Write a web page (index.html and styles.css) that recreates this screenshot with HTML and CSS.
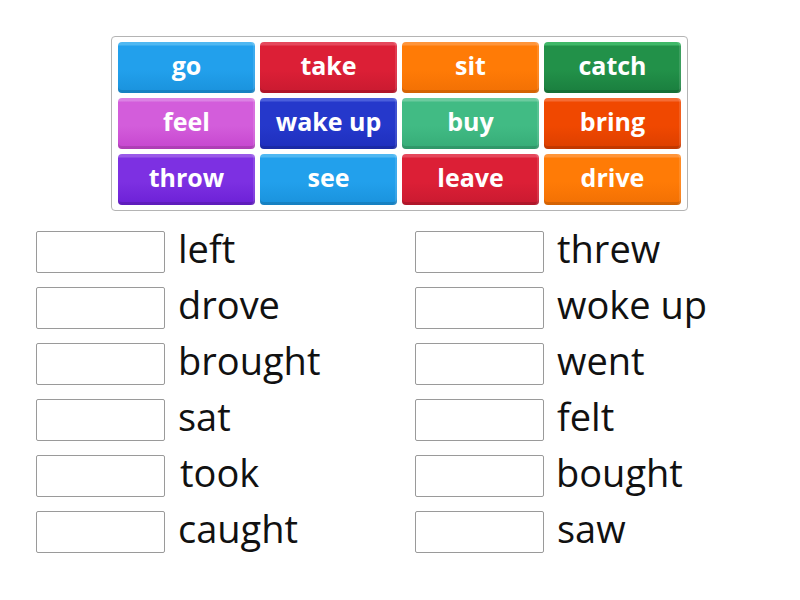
FILE: index.html
```html
<!DOCTYPE html>
<html>
<head>
<meta charset="utf-8">
<link rel="stylesheet" href="styles.css">
</head>
<body>
<div class="bank">
  <div class="tile blue">go</div>
  <div class="tile red">take</div>
  <div class="tile orange">sit</div>
  <div class="tile green">catch</div>
  <div class="tile pink">feel</div>
  <div class="tile navy">wake up</div>
  <div class="tile teal">buy</div>
  <div class="tile redorange">bring</div>
  <div class="tile purple">throw</div>
  <div class="tile blue">see</div>
  <div class="tile red">leave</div>
  <div class="tile orange">drive</div>
</div>
<div class="answers">
  <div class="row"><div class="box"></div><span class="word">left</span></div>
  <div class="row"><div class="box"></div><span class="word">threw</span></div>
  <div class="row"><div class="box"></div><span class="word">drove</span></div>
  <div class="row"><div class="box"></div><span class="word">woke up</span></div>
  <div class="row"><div class="box"></div><span class="word">brought</span></div>
  <div class="row"><div class="box"></div><span class="word">went</span></div>
  <div class="row"><div class="box"></div><span class="word">sat</span></div>
  <div class="row"><div class="box"></div><span class="word">felt</span></div>
  <div class="row"><div class="box"></div><span class="word shift">took</span></div>
  <div class="row"><div class="box"></div><span class="word back">bought</span></div>
  <div class="row"><div class="box"></div><span class="word">caught</span></div>
  <div class="row"><div class="box"></div><span class="word">saw</span></div>
</div>
</body>
</html>
```
FILE: styles.css
```css
html, body {
  margin: 0;
  padding: 0;
  background: #ffffff;
  font-family: "Open Sans", "Liberation Sans", sans-serif;
}

.bank {
  width: 564px;
  margin: 36px 0 0 111px;
  padding: 5px 5px 5px 6px;
  border: 1px solid #b4b4b4;
  border-radius: 4px;
  display: grid;
  grid-template-columns: repeat(4, 137px);
  grid-auto-rows: 51px;
  column-gap: 5px;
  row-gap: 5px;
}

.tile {
  display: flex;
  align-items: center;
  justify-content: center;
  color: #ffffff;
  font-weight: 700;
  font-size: 25px;
  border-radius: 4px;
  background: linear-gradient(to bottom, var(--hi) 0, var(--hi) 3px, var(--base) 4px, var(--base) 55%, var(--lo) 100%);
  box-shadow: inset 0 -3px 0 rgba(0, 0, 0, 0.12), inset -2px 0 0 rgba(255, 255, 255, 0.12);
  padding-bottom: 5px;
  box-sizing: border-box;
}

.blue { --hi: #4fb8f2; --base: #22a0ec; --lo: #1a92dc; }
.red { --hi: #e5485c; --base: #dc1f36; --lo: #c91a30; }
.orange { --hi: #ff953a; --base: #ff7b06; --lo: #f27004; }
.green { --hi: #3fb868; --base: #229149; --lo: #1a7e3e; }
.pink { --hi: #dc82e4; --base: #d35ddb; --lo: #c646cf; }
.navy { --hi: #4a5edc; --base: #2538cb; --lo: #1e2fbd; }
.teal { --hi: #6ccb9f; --base: #41bb84; --lo: #36ac77; }
.redorange { --hi: #f56c34; --base: #f04800; --lo: #dc3f00; }
.purple { --hi: #9a5ae8; --base: #7d30e2; --lo: #6c20d6; }

.answers {
  margin: 20px 0 0 36px;
  display: grid;
  grid-template-columns: 379px 379px;
  grid-auto-rows: 42px;
  row-gap: 14px;
}

.row {
  display: flex;
  align-items: center;
}

.box {
  width: 127px;
  height: 40px;
  border: 1px solid #9a9a9a;
  border-radius: 2px;
  background: #ffffff;
  flex: none;
}

.word {
  margin-left: 13px;
  margin-bottom: 9px;
  font-size: 38px;
  color: #111111;
  line-height: 52px;
  white-space: nowrap;
}

.word.shift { margin-left: 15px; }
.word.back { margin-left: 12px; }
```
